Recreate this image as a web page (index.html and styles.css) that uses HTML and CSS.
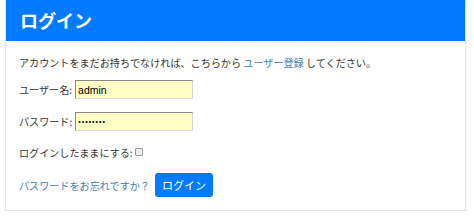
FILE: index.html
```html
<!doctype html>
<html>
<head>
 <meta charset="utf-8">
 <title>ログイン</title>
 <link rel="stylesheet" href="styles.css">
</head>
<body>
  <div class="card">
    <div class="card-header">ログイン</div>
    <div class="card-body">
      <p class="intro">アカウントをまだお持ちでなければ、こちらから <a href="#">ユーザー登録</a> してください。</p>
      <div class="field">
        <label>ユーザー名:</label><input type="text" value="admin">
      </div>
      <div class="field field-pass">
        <label>パスワード:</label><input type="password" value="password">
      </div>
      <div class="remember">
        <label>ログインしたままにする:</label><input type="checkbox" class="check">
      </div>
      <div class="actions">
        <a href="#">パスワードをお忘れですか？</a>
        <button>ログイン</button>
      </div>
    </div>
  </div>
</body>
</html>
```

FILE: styles.css
```css
html,body{margin:0;padding:0;background:#fff;}
body{font-family:"Noto Sans CJK JP","Noto Sans",sans-serif;color:#333;font-size:10.1px;}
a{color:#3d7cc0;text-decoration:none;}
.card{margin:0 8px 0 5px;border:1px solid #e4e4e4;border-top:none;box-shadow:0 1px 2px rgba(0,0,0,.06);}
.card-header{background:#007bff;color:#fff;height:41px;line-height:40px;padding:0 14px;font-size:18px;font-weight:bold;}
.card-body{padding:13px 13px 13px 13px;}
.intro{margin:0;line-height:18px;}
.field{display:flex;align-items:center;height:19px;margin-top:8px;}
.field-pass{margin-top:13px;}
.field label{margin-right:3px;}
.field input{box-sizing:border-box;width:118px;height:19px;margin:0;padding:0 2px;border:1px solid;border-color:#8a8a8a #d8d8d8 #d8d8d8 #8a8a8a;background:#ffffc6;font-family:"Liberation Sans",sans-serif;font-size:10.5px;color:#000;outline:none;}
.field-pass input{font-size:7px;letter-spacing:1px;}
.remember{display:flex;align-items:center;height:18px;margin-top:12px;}
.check{appearance:none;-webkit-appearance:none;width:8px;height:8px;margin:0 0 0 2px;border:1px solid #9a9a9a;border-radius:1px;background:#ececec;}
.actions{display:flex;align-items:center;margin-top:12px;height:24px;}
.actions button{margin-left:5px;height:24px;padding:0 7px;border:none;border-radius:3px;background:#007bff;color:#fff;font-family:"Noto Sans CJK JP",sans-serif;font-size:11px;}
```
